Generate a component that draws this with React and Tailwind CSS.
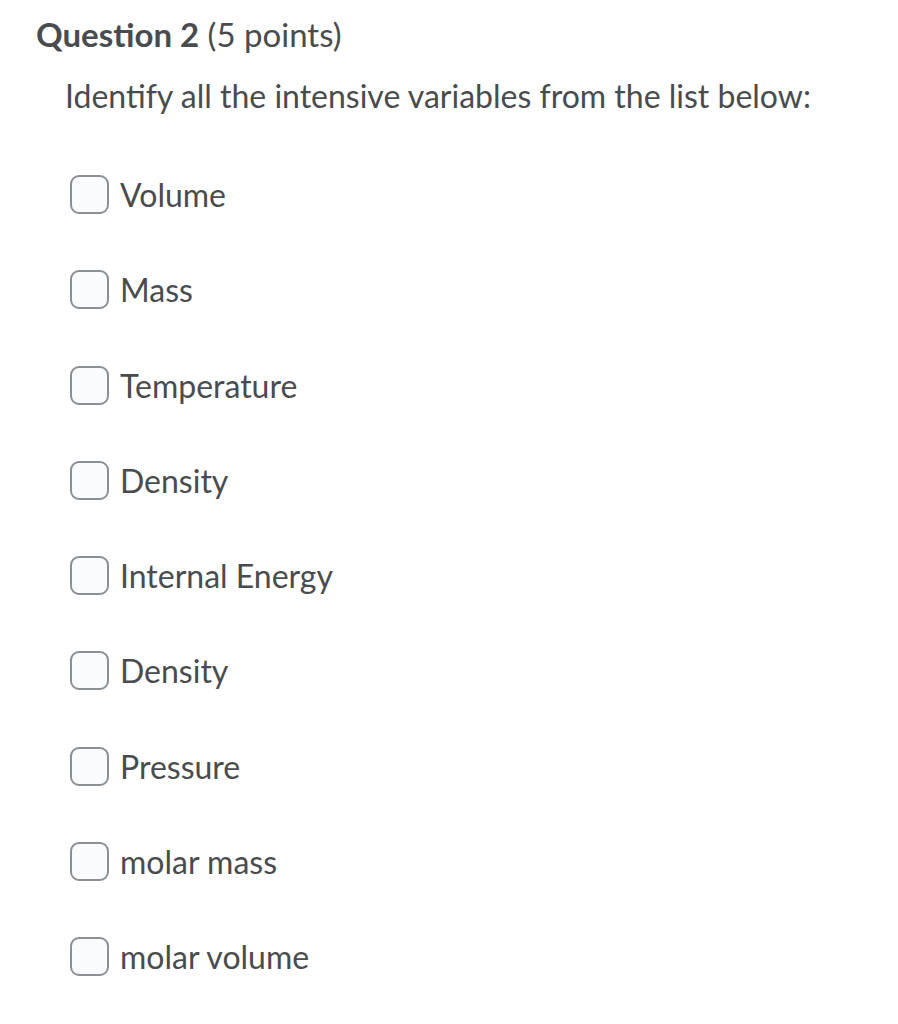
import React from "react";

const options = [
  "Volume",
  "Mass",
  "Temperature",
  "Density",
  "Internal Energy",
  "Density",
  "Pressure",
  "molar mass",
  "molar volume",
];

export default function App() {
  return (
    <div className="min-h-screen w-full bg-white text-[#494c4e] font-['Lato','Noto_Sans',sans-serif]">
      <div className="pl-[36px] pt-[13px]">
        <h2 className="text-[33px] leading-[42px]">
          <span className="font-bold">Question 2</span> (5 points)
        </h2>
        <p className="mt-[20px] pl-[29px] text-[32px] leading-[42px]">
          Identify all the intensive variables from the list below:
        </p>
        <ul className="mt-[58px] flex flex-col gap-[56.25px] pl-[34px]">
          {options.map((opt, i) => (
            <li key={i} className="flex items-center gap-[11px] h-[39px]">
              <span className="block w-[39px] h-[39px] shrink-0 rounded-[9px] border-2 border-[#8a9094] bg-[#f9fbff]" />
              <span className="text-[32px] leading-[39px]">{opt}</span>
            </li>
          ))}
        </ul>
      </div>
    </div>
  );
}
